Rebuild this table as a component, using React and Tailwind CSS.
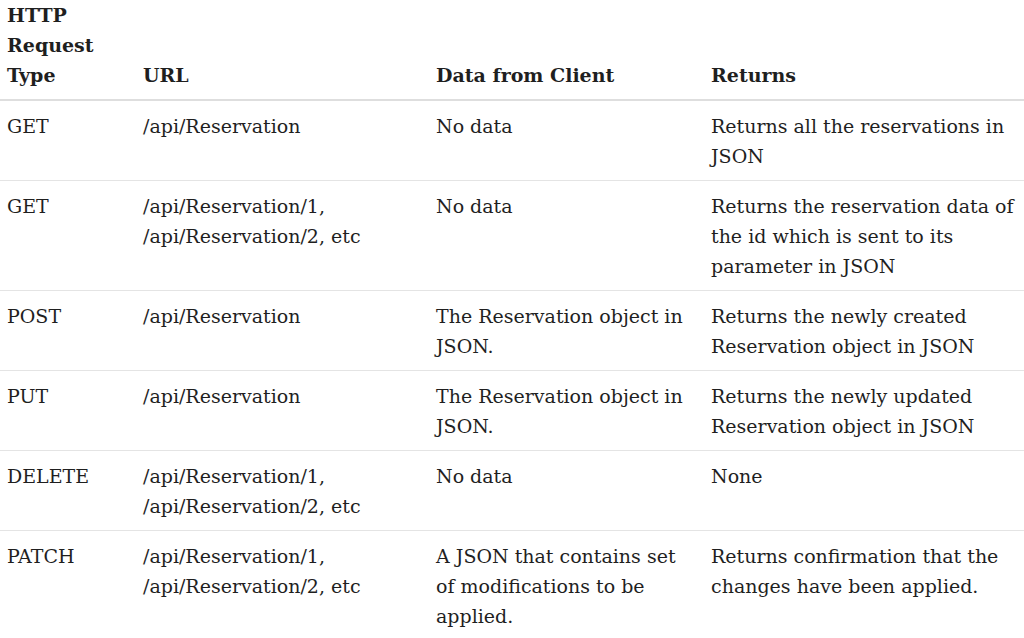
import React from "react";

const rows = [
  {
    method: "GET",
    url: ["/api/Reservation"],
    data: "No data",
    returns: "Returns all the reservations in JSON",
  },
  {
    method: "GET",
    url: ["/api/Reservation/1,", "/api/Reservation/2, etc"],
    data: "No data",
    returns: "Returns the reservation data of the id which is sent to its parameter in JSON",
  },
  {
    method: "POST",
    url: ["/api/Reservation"],
    data: "The Reservation object in JSON.",
    returns: "Returns the newly created Reservation object in JSON",
  },
  {
    method: "PUT",
    url: ["/api/Reservation"],
    data: "The Reservation object in JSON.",
    returns: "Returns the newly updated Reservation object in JSON",
  },
  {
    method: "DELETE",
    url: ["/api/Reservation/1,", "/api/Reservation/2, etc"],
    data: "No data",
    returns: "None",
  },
  {
    method: "PATCH",
    url: ["/api/Reservation/1,", "/api/Reservation/2, etc"],
    data: "A JSON that contains set of modifications to be applied.",
    returns: "Returns confirmation that the changes have been applied.",
  },
];

export default function App() {
  return (
    <div className="w-[1024px] h-[638px] overflow-hidden bg-white text-[#1f1f1f] font-['DejaVu_Serif',serif] text-[19px] leading-[30px]">
      <table className="table-fixed w-[1024px] border-collapse">
        <colgroup>
          <col className="w-[136px]" />
          <col className="w-[293px]" />
          <col className="w-[275px]" />
          <col className="w-[320px]" />
        </colgroup>
        <thead>
          <tr className="border-b-2 border-[#dedede]">
            <th className="px-[7px] pb-[9px] pt-0 text-left align-bottom font-bold">
              HTTP
              <br />
              Request
              <br />
              Type
            </th>
            <th className="px-[7px] pb-[9px] text-left align-bottom font-bold">URL</th>
            <th className="px-[7px] pb-[9px] text-left align-bottom font-bold">Data from Client</th>
            <th className="px-[7px] pb-[9px] text-left align-bottom font-bold">Returns</th>
          </tr>
        </thead>
        <tbody>
          {rows.map((r, i) => (
            <tr key={i} className="border-b border-[#e4e4e4]">
              <td className="px-[7px] pt-[10px] pb-[9px] align-top">{r.method}</td>
              <td className="px-[7px] pt-[10px] pb-[9px] align-top">
                {r.url.map((u, j) => (
                  <div key={j}>{u}</div>
                ))}
              </td>
              <td className="px-[7px] pt-[10px] pb-[9px] align-top">{r.data}</td>
              <td className="px-[7px] pt-[10px] pb-[9px] align-top">{r.returns}</td>
            </tr>
          ))}
        </tbody>
      </table>
    </div>
  );
}
